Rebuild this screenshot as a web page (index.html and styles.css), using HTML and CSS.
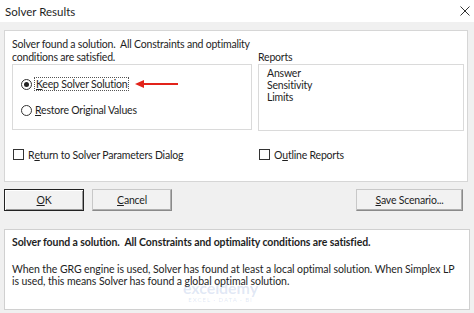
FILE: index.html
```html
<!DOCTYPE html>
<html lang="en">
<head>
  <meta charset="UTF-8" />
  <title>Solver Results</title>
  <link rel="stylesheet" href="styles.css">
</head>
<body>
  <div class="dialog">
    <div class="titlebar">
      <span>Solver Results</span>
      <svg class="close" width="10" height="10" viewBox="0 0 10 10">
        <path d="M0.5 0.5 L9.5 9.5 M9.5 0.5 L0.5 9.5" stroke="#333" stroke-width="1" />
      </svg>
    </div>

    <div class="panel">
      <div class="grid">
        <p class="intro">Solver found a solution.&nbsp; All Constraints and optimality<br>conditions are satisfied.</p>
        <div class="reports-label">Reports</div>

        <div class="choice-box">
          <label class="radio-row">
            <span class="radio checked"></span>
            <span class="focus"><u>K</u>eep Solver Solution</span>
            <svg class="arrow" width="44" height="8" viewBox="0 0 44 8">
              <line x1="6" y1="4" x2="43" y2="4" stroke="#e2231a" stroke-width="2" />
              <polygon points="0,4 9,0 9,8" fill="#e2231a" />
            </svg>
          </label>
          <label class="radio-row">
            <span class="radio"></span>
            <span><u>R</u>estore Original Values</span>
          </label>
        </div>

        <ul class="listbox">
          <li>Answer</li>
          <li>Sensitivity</li>
          <li>Limits</li>
        </ul>

        <label class="check-row"><span class="check"></span>R<u>e</u>turn to Solver Parameters Dialog</label>
        <label class="check-row"><span class="check"></span>O<u>u</u>tline Reports</label>
      </div>
    </div>

    <div class="buttons">
      <div class="left">
        <button class="default"><u>O</u>K</button>
        <button><u>C</u>ancel</button>
      </div>
      <button class="wide"><u>S</u>ave Scenario...</button>
    </div>

    <div class="message">
      <p class="strong">Solver found a solution.&nbsp; All Constraints and optimality conditions are satisfied.</p>
      <p>When the GRG engine is used, Solver has found at least a local optimal solution. When Simplex LP is used, this means Solver has found a global optimal solution.</p>
      <div class="watermark">
        <span class="mark">exceldemy</span>
        <span class="sub">EXCEL · DATA · BI</span>
      </div>
    </div>
  </div>
</body>
</html>
```

FILE: styles.css
```css
body {
  margin: 0;
  font-family: Lato, 'Open Sans', sans-serif;
  font-size: 10.5px;
  letter-spacing: -0.2px;
  color: #1e1e1e;
  background: #f0f0f0;
}

.dialog {
  width: 474px;
  height: 313px;
  overflow: hidden;
}

.titlebar {
  height: 22px;
  background: #fff;
  display: flex;
  align-items: center;
  justify-content: space-between;
  padding: 0 4px 0 5px;
  font-size: 11.5px;
  letter-spacing: 0;
}

.panel {
  margin: 8px 6px 0 4px;
  height: 152px;
  background: #fff;
  border: 1px solid #d6d6d6;
  padding: 7px 0 0 7px;
  box-sizing: border-box;
}

.grid {
  display: grid;
  grid-template-columns: 240px 206px;
  column-gap: 6px;
}

.intro {
  margin: 0;
  line-height: 13px;
  white-space: nowrap;
}

.reports-label {
  align-self: end;
  line-height: 13px;
}

.choice-box {
  height: 66px;
  border: 1px solid #dadada;
  box-sizing: border-box;
  padding: 12px 0 0 8px;
}

.radio-row {
  display: flex;
  align-items: center;
  height: 14px;
  margin-bottom: 12px;
}

.radio {
  width: 9px;
  height: 9px;
  border: 1px solid #333;
  border-radius: 50%;
  margin-right: 3px;
  position: relative;
  flex: none;
}

.radio.checked::after {
  content: "";
  position: absolute;
  left: 2px;
  top: 2px;
  width: 5px;
  height: 5px;
  border-radius: 50%;
  background: #222;
}

.focus {
  outline: 1px dotted #555;
  padding: 0 1px;
}

.arrow {
  margin-left: 7px;
}

.listbox {
  list-style: none;
  margin: 0;
  height: 67px;
  border: 1px solid #dadada;
  box-sizing: border-box;
  padding: 2px 0 0 8px;
}

.listbox li {
  line-height: 12px;
}

.check-row {
  display: flex;
  align-items: center;
  margin-top: 17px;
  height: 13px;
}

.check {
  width: 9px;
  height: 9px;
  border: 1px solid #333;
  margin: 0 4px 0 1px;
  flex: none;
}

.buttons {
  display: flex;
  justify-content: space-between;
  margin: 7px 11px 0 4px;
}

.left {
  display: flex;
  gap: 8px;
}

button {
  width: 80px;
  height: 22px;
  font: inherit;
  letter-spacing: inherit;
  color: #1e1e1e;
  background: #f2f2f2;
  border: 1px solid #c8c8c8;
  border-right-color: #8a8a8a;
  border-bottom-color: #8a8a8a;
  box-shadow: inset -1px -1px 0 #b0b0b0;
  padding: 0;
}

button.default {
  border: 1px solid #222;
  box-shadow: inset 1px 1px 0 #fff, inset -1px -1px 0 #9a9a9a;
}

button.wide {
  width: 107px;
}

.message {
  position: relative;
  margin: 18px 4px 0 4px;
  height: 81px;
  background: #fff;
  border: 1px solid #d0d0d0;
  box-sizing: border-box;
  padding: 6px 7px 0 7px;
  line-height: 12px;
  letter-spacing: -0.08px;
}

.message p {
  margin: 0 0 15px 0;
}

.message .strong {
  font-weight: bold;
}

.watermark {
  position: absolute;
  left: 178px;
  top: 50px;
  display: flex;
  flex-direction: column;
  align-items: center;
  color: rgba(120, 150, 210, 0.22);
}

.watermark .mark {
  font-size: 16px;
  font-weight: bold;
  line-height: 16px;
}

.watermark .sub {
  font-size: 6px;
  letter-spacing: 1px;
  line-height: 8px;
}
```
